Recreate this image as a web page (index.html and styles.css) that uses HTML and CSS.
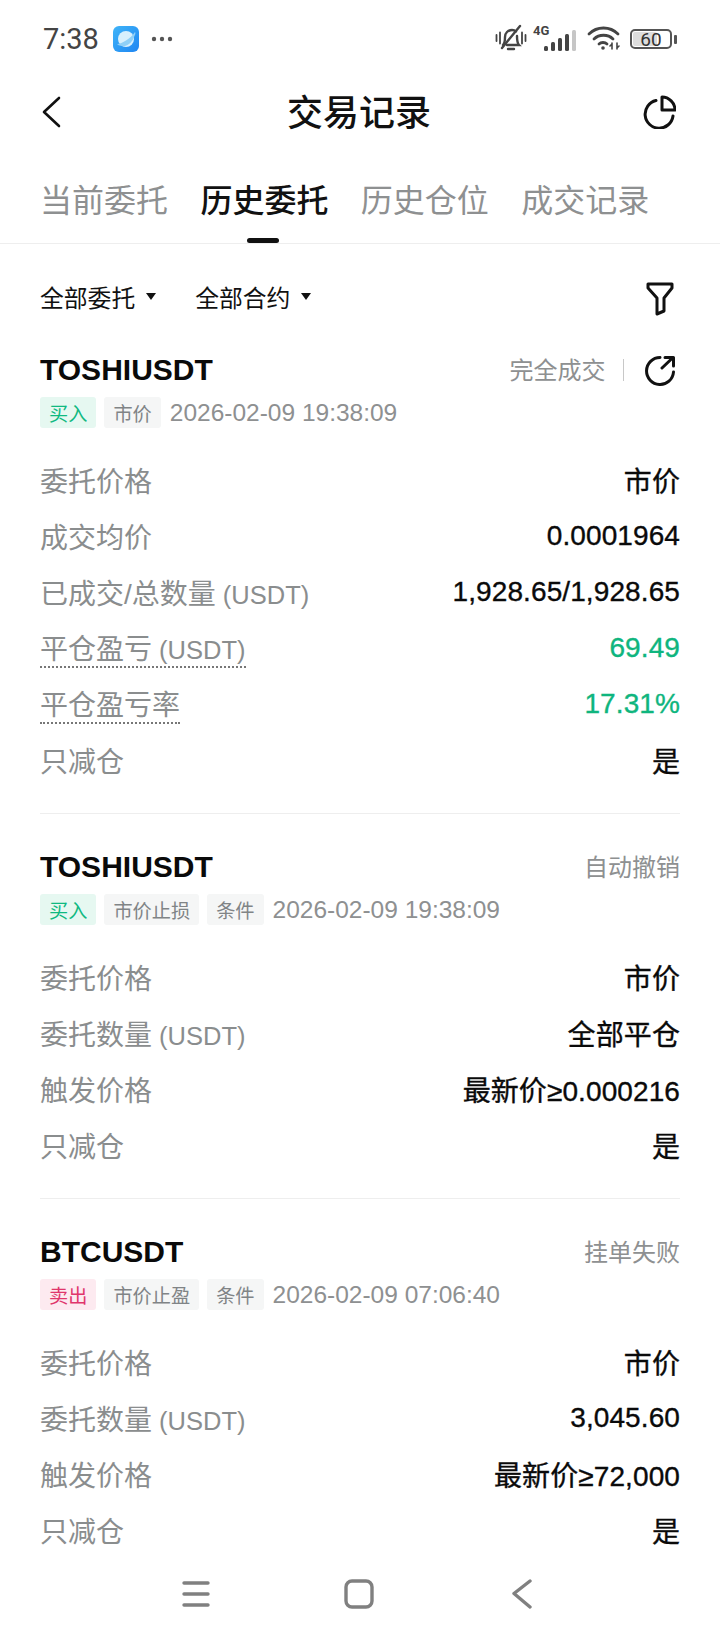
FILE: index.html
```html
<!DOCTYPE html>
<html lang="zh-CN">
<head>
<meta charset="utf-8">
<title>交易记录</title>
<link rel="stylesheet" href="styles.css">
</head>
<body>
<div class="page">
  <div class="status">
    <div class="status-left">
      <span class="time">7:38</span>
      <svg class="app" width="26" height="26" viewBox="0 0 26 26"><defs><linearGradient id="g" x1="0" y1="0" x2="1" y2="1"><stop offset="0" stop-color="#3fb4f8"/><stop offset="1" stop-color="#1f86f2"/></linearGradient></defs><rect width="26" height="26" rx="6" fill="url(#g)"/><circle cx="13" cy="13" r="8" fill="#d8f0fd"/><path d="M4 18C9 18 18 12 22 6c1 1 0 3-1 5-1 4-5 8-9 9-3 0-6 0-8-2z" fill="#8fd0f7"/></svg>
      <svg class="dots" width="22" height="6" viewBox="0 0 22 6"><circle cx="3" cy="3" r="2.2" fill="#555"/><circle cx="11" cy="3" r="2.2" fill="#555"/><circle cx="19" cy="3" r="2.2" fill="#555"/></svg>
    </div>
    <div class="status-right">
      <svg class="s-bell" width="32" height="30" viewBox="0 0 32 30" fill="none" stroke="#444" stroke-width="2.4" stroke-linecap="round"><path d="M1.500 11v6M5 8.500v11M27 8.500v11M30.500 11v6" stroke-width="1.800"/><path d="M8 21c2-2 2-5 2-8 0-4 3-7 7-7 2 0 3 .5 4 1.500M22 12c0 4 0 7 2 9H12M13 25h6"/><path d="M7 24 25 2"/></svg>
      <span class="net"><span class="net-label">4G</span><svg width="33" height="22" viewBox="0 0 33 22"><rect x="0" y="16" width="4" height="5" rx="1.500" fill="#444"/><rect x="7" y="12" width="4" height="9" rx="1.500" fill="#444"/><rect x="14" y="8" width="4" height="13" rx="1.500" fill="#444"/><rect x="21" y="4" width="4" height="17" rx="1.500" fill="#444"/><rect x="28" y="0" width="4" height="21" rx="1.500" fill="#c6c6c6"/></svg></span>
      <svg class="s-wifi" width="33" height="26" viewBox="0 0 33 26" fill="none" stroke="#444" stroke-width="2.800" stroke-linecap="round"><path d="M2 8C10 0 23 0 31 8M7 13C12 8 21 8 26 13M12 18c2-2 6-2 8 0"/><circle cx="16" cy="22" r="1.800" fill="#444" stroke="none"/><path d="M25 17v6M30 17v6M23 20l2-2M32 20l-2 2" stroke-width="1.600"/></svg>
      <span class="batt"><span class="batt-body"><span class="batt-fill"></span><span class="batt-num">60</span></span><span class="batt-tip"></span></span>
    </div>
  </div>

  <header class="nav">
    <svg class="nav-back" width="20" height="32" viewBox="0 0 20 32" fill="none" stroke="#111" stroke-width="2.600" stroke-linecap="round" stroke-linejoin="round"><path d="M17 2 2 16l15 14"/></svg>
    <h1 class="title">交易记录</h1>
    <svg class="nav-pie" width="34" height="34" viewBox="0 0 34 34" fill="none" stroke="#111" stroke-width="3" stroke-linejoin="round" stroke-linecap="round"><path d="M14 5.500A14 14 0 1 0 31 21"/><path d="M20 2v13h13C33 8 27 2 20 2z"/></svg>
  </header>

  <nav class="tabs">
    <span class="tab">当前委托</span>
    <span class="tab tab-on">历史委托</span>
    <span class="tab">历史仓位</span>
    <span class="tab">成交记录</span>
  </nav>

  <div class="filters">
    <span class="filter">全部委托<i class="caret"></i></span>
    <span class="filter">全部合约<i class="caret"></i></span>
    <svg class="funnel" width="30" height="34" viewBox="0 0 30 34" fill="none" stroke="#111" stroke-width="3" stroke-linejoin="round"><path d="M3 2h24v4l-8 10v13l-7 3V16L3 6z"/></svg>
  </div>

  <section class="card">
    <div class="card-head">
      <span class="sym">TOSHIUSDT</span>
      <span class="state"><span class="st">完全成交</span><i class="sep"></i><svg class="share" width="30" height="31" viewBox="0 0 30 31" fill="none" stroke="#111" stroke-width="3" stroke-linecap="round" stroke-linejoin="round"><path d="M15 2.500A13.500 13.500 0 1 0 28.500 17"/><path d="M17 13 28 2.500M20 2.500h8.500V11"/></svg></span>
    </div>
    <div class="tags"><span class="tag buy">买入</span><span class="tag">市价</span><span class="date">2026-02-09 19:38:09</span></div>
    <div class="rows">
      <div class="row"><span class="k">委托价格</span><span class="v">市价</span></div>
      <div class="row"><span class="k">成交均价</span><span class="v">0.0001964</span></div>
      <div class="row"><span class="k">已成交/总数量<span class="u"> (USDT)</span></span><span class="v">1,928.65/1,928.65</span></div>
      <div class="row"><span class="k dotted">平仓盈亏<span class="u"> (USDT)</span></span><span class="v up">69.49</span></div>
      <div class="row"><span class="k dotted">平仓盈亏率</span><span class="v up">17.31%</span></div>
      <div class="row"><span class="k">只减仓</span><span class="v">是</span></div>
    </div>
  </section>

  <section class="card">
    <div class="card-head">
      <span class="sym">TOSHIUSDT</span>
      <span class="state"><span class="st">自动撤销</span></span>
    </div>
    <div class="tags"><span class="tag buy">买入</span><span class="tag">市价止损</span><span class="tag">条件</span><span class="date">2026-02-09 19:38:09</span></div>
    <div class="rows">
      <div class="row"><span class="k">委托价格</span><span class="v">市价</span></div>
      <div class="row"><span class="k">委托数量<span class="u"> (USDT)</span></span><span class="v">全部平仓</span></div>
      <div class="row"><span class="k">触发价格</span><span class="v">最新价≥0.000216</span></div>
      <div class="row"><span class="k">只减仓</span><span class="v">是</span></div>
    </div>
  </section>

  <section class="card card-last">
    <div class="card-head">
      <span class="sym">BTCUSDT</span>
      <span class="state"><span class="st">挂单失败</span></span>
    </div>
    <div class="tags"><span class="tag sell">卖出</span><span class="tag">市价止盈</span><span class="tag">条件</span><span class="date">2026-02-09 07:06:40</span></div>
    <div class="rows">
      <div class="row"><span class="k">委托价格</span><span class="v">市价</span></div>
      <div class="row"><span class="k">委托数量<span class="u"> (USDT)</span></span><span class="v">3,045.60</span></div>
      <div class="row"><span class="k">触发价格</span><span class="v">最新价≥72,000</span></div>
      <div class="row"><span class="k">只减仓</span><span class="v">是</span></div>
    </div>
  </section>

  <footer class="sysnav">
    <svg width="30" height="28" viewBox="0 0 30 28" fill="none" stroke="#808080" stroke-width="3.400" stroke-linecap="round"><path d="M3 3h24M3 14h24M3 25h24"/></svg>
    <svg class="sys-home" width="30" height="30" viewBox="0 0 30 30" fill="none" stroke="#808080" stroke-width="3.400"><rect x="2" y="2" width="26" height="26" rx="6"/></svg>
    <svg class="sys-back" width="20" height="30" viewBox="0 0 20 30" fill="none" stroke="#808080" stroke-width="3.400" stroke-linecap="round" stroke-linejoin="round"><path d="M18 2 2 14.500 18 28"/></svg>
  </footer>
</div>
</body>
</html>
```
FILE: styles.css
```css
* { box-sizing: border-box; }
html, body { margin: 0; padding: 0; background: #fff; }
body { font-family: "Liberation Sans", "Noto Sans CJK SC", sans-serif; color: #111; }
.page { width: 720px; height: 1640px; overflow: hidden; display: flex; flex-direction: column; position: relative; }

.status { height: 78px; padding: 0 43px 0 43px; display: flex; justify-content: space-between; align-items: center; }
.status-left { display: flex; align-items: center; }
.time { font-family: Roboto, sans-serif; font-size: 29px; color: #444; }
.app { margin-left: 14px; }
.dots { margin-left: 12px; }
.status-right { display: flex; align-items: center; }
.net { display: flex; align-items: flex-end; position: relative; width: 44px; height: 26px; justify-content: flex-end; margin-left: 6px; }
.net-label { position: absolute; left: 0; top: -3px; font: 700 13px/16px Roboto, sans-serif; color: #444; }
.s-wifi { margin-left: 10px; }
.batt { display: flex; align-items: center; gap: 2px; margin-left: 10px; }
.batt-body { width: 42px; height: 20px; border: 2px solid #555; border-radius: 5px; position: relative; display: flex; align-items: center; justify-content: center; }
.batt-fill { position: absolute; left: 1px; top: 1px; bottom: 1px; width: 24px; background: #ddd; border-radius: 2px; }
.batt-num { position: relative; font: 400 19px/1 Roboto, sans-serif; color: #333; }
.batt-tip { width: 3px; height: 9px; background: #555; border-radius: 1px; }

.nav { height: 68px; padding: 0 44px 0 42px; display: grid; grid-template-columns: 1fr auto 1fr; align-items: center; }
.nav-pie { justify-self: end; }
.title { margin: 4px 0 0; font-size: 36px; font-weight: 500; line-height: 1; color: #111; }

.tabs { height: 98px; padding: 33px 40px 0; display: flex; gap: 32.400px; align-items: flex-start; border-bottom: 1px solid #eee; }
.tab { font-size: 32px; line-height: 44px; color: #8e9091; position: relative; }
.tab-on { color: #111; font-weight: 500; }
.tab-on::after { content: ""; position: absolute; left: 47px; top: 59px; width: 32px; height: 5px; background: #111; border-radius: 3px; }

.filters { height: 109px; padding: 0 40px; display: flex; align-items: center; gap: 39px; }
.filter { font-size: 23.800px; color: #111; display: flex; align-items: center; margin-bottom: 4px; }
.caret { margin-left: 11px; width: 0; height: 0; border-left: 5.500px solid transparent; border-right: 5.500px solid transparent; border-top: 7px solid #111; }
.funnel { margin-left: auto; margin-right: 5px; }

.card { margin: 0 40px 36px; border-bottom: 1px solid #eee; padding-bottom: 25px; }
.card-last { border-bottom: 0; }
.card-head { height: 34px; display: flex; justify-content: space-between; align-items: center; }
.sym { font-size: 30px; font-weight: 700; color: #0a0a0a; }
.state { font-size: 24px; color: #8e9091; display: flex; align-items: center; }
.st { margin-bottom: 4px; }
.sep { width: 1.500px; height: 22px; background: #c8c8c8; margin: 0 21px 0 17px; }
.share { margin-right: 5px; }
.tags { margin-top: 10px; height: 31px; display: flex; align-items: center; gap: 8px; }
.tag { height: 31px; padding: 0 9px; border-radius: 3px; background: #f5f6f6; color: #808486; font-size: 19.200px; display: flex; align-items: center; }
.buy { background: #e6f8f1; color: #10b981; }
.sell { background: #fdeaf0; color: #e0356b; }
.date { margin-left: 1px; font-size: 24.500px; color: #8e9091; }
.rows { margin-top: 24px; }
.row { height: 56px; display: flex; justify-content: space-between; align-items: center; }
.k { font-size: 28px; line-height: 38px; color: #8a8d8e; position: relative; top: 3px; }
.u { font-size: 25.500px; }
.dotted { border-bottom: 2px dotted #777; line-height: 32px; }
.v { font-size: 28px; letter-spacing: .1px; color: #0a0a0a; -webkit-text-stroke: .35px currentColor; }
.up { color: #0fb57e; }

.sysnav { position: absolute; left: 0; right: 0; bottom: 0; height: 92px; padding: 0 0 0 181px; display: flex; align-items: center; background: #fff; }
.sys-home { margin-left: 133px; }
.sys-back { margin-left: 138px; }
```
